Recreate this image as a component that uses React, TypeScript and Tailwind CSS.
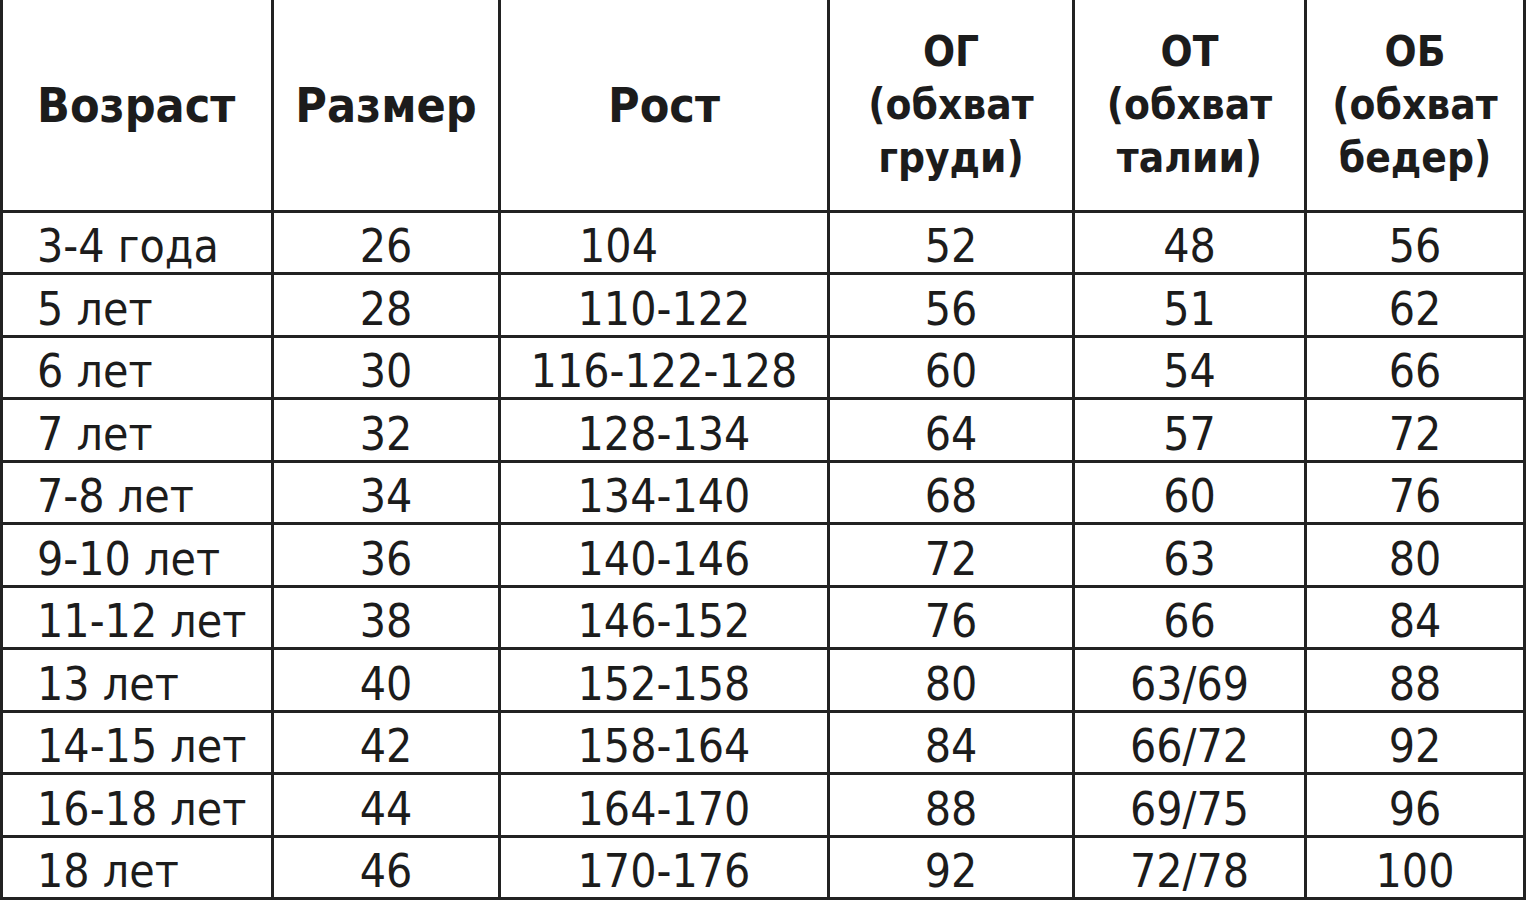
const rows = [
  ['3-4 года', '26', '104', '52', '48', '56'],
  ['5 лет', '28', '110-122', '56', '51', '62'],
  ['6 лет', '30', '116-122-128', '60', '54', '66'],
  ['7 лет', '32', '128-134', '64', '57', '72'],
  ['7-8 лет', '34', '134-140', '68', '60', '76'],
  ['9-10 лет', '36', '140-146', '72', '63', '80'],
  ['11-12 лет', '38', '146-152', '76', '66', '84'],
  ['13 лет', '40', '152-158', '80', '63/69', '88'],
  ['14-15 лет', '42', '158-164', '84', '66/72', '92'],
  ['16-18 лет', '44', '164-170', '88', '69/75', '96'],
  ['18 лет', '46', '170-176', '92', '72/78', '100'],
];

const cols = ['w-[271px]', 'w-[227px]', 'w-[329px]', 'w-[245px]', 'w-[232px]', 'w-[219px]'];

export default function App() {
  return (
    <div className="h-[900px] w-[1528px] overflow-hidden bg-white text-[#1c1c1c] [font-family:'DejaVu_Sans_Condensed','DejaVu_Sans',sans-serif]">
      <table className="w-[1524px] table-fixed border-collapse">
        <colgroup>
          {cols.map((c, i) => (
            <col key={i} className={c} />
          ))}
        </colgroup>
        <thead>
          <tr className="h-[211px]">
            <th className="border-3 border-t-0 border-[#222] pl-[34px] text-left text-[48px] font-bold">
              Возраст
            </th>
            <th className="border-3 border-t-0 border-[#222] text-center text-[48px] font-bold">
              Размер
            </th>
            <th className="border-3 border-t-0 border-[#222] text-center text-[48px] font-bold">
              Рост
            </th>
            <th className="border-3 border-t-0 border-[#222] text-center text-[42px] leading-[53px] font-semibold">
              ОГ<br />(обхват<br />груди)
            </th>
            <th className="border-3 border-t-0 border-[#222] text-center text-[42px] leading-[53px] font-semibold">
              ОТ<br />(обхват<br />талии)
            </th>
            <th className="border-3 border-t-0 border-[#222] text-center text-[42px] leading-[53px] font-semibold">
              ОБ<br />(обхват<br />бедер)
            </th>
          </tr>
        </thead>
        <tbody>
          {rows.map((r, i) => (
            <tr key={i} className="h-[62.5px]">
              <td className="border-3 border-[#222] pt-2 pl-[34px] text-left text-[46px] leading-none">
                {r[0]}
              </td>
              <td className="border-3 border-[#222] pt-2 text-center text-[46px] leading-none">{r[1]}</td>
              <td className="border-3 border-[#222] pt-2 text-center text-[46px] leading-none">
                {i === 0 ? <span className="inline-block w-[170px] text-left">{r[2]}</span> : r[2]}
              </td>
              <td className="border-3 border-[#222] pt-2 text-center text-[46px] leading-none">{r[3]}</td>
              <td className="border-3 border-[#222] pt-2 text-center text-[46px] leading-none">{r[4]}</td>
              <td className="border-3 border-[#222] pt-2 text-center text-[46px] leading-none">{r[5]}</td>
            </tr>
          ))}
        </tbody>
      </table>
    </div>
  );
}
